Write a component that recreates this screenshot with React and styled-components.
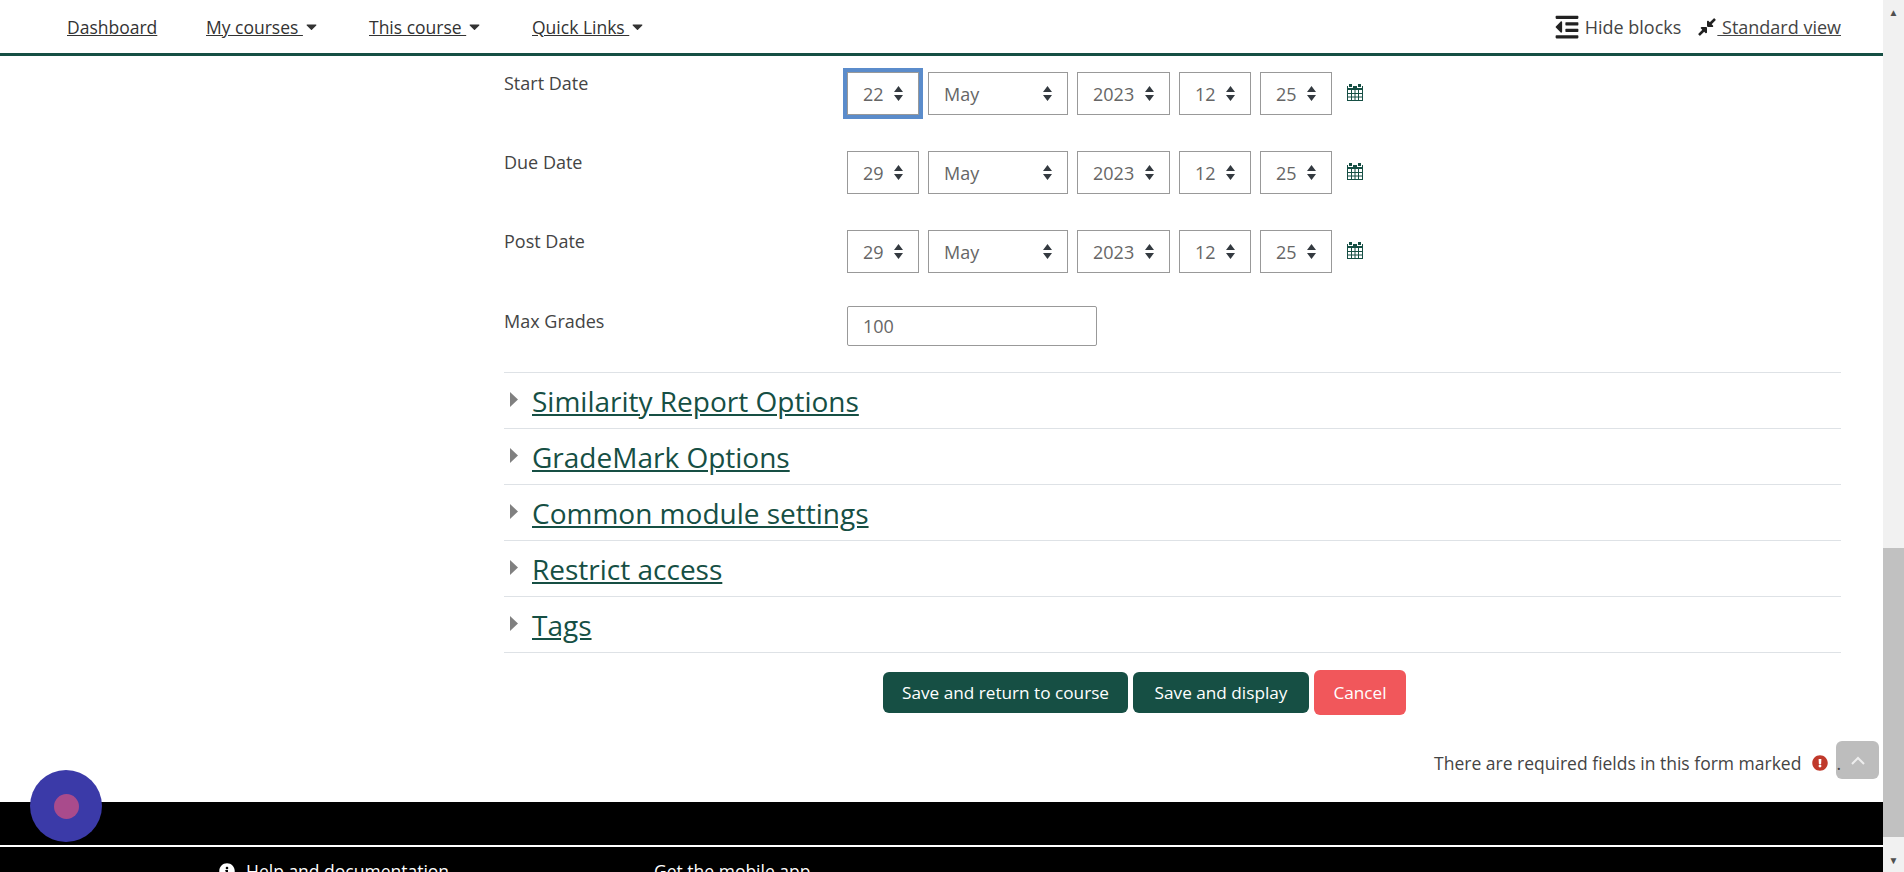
import styled, { createGlobalStyle } from "styled-components";
import {
  FaCaretDown,
  FaCompressAlt,
  FaExclamationCircle,
  FaInfoCircle,
  FaOutdent,
} from "react-icons/fa";

const GREEN = "#164f44";

const GlobalStyle = createGlobalStyle`
  html, body {
    margin: 0;
    height: 100%;
    overflow: hidden;
    background: #fff;
  }
  body {
    font-family: "Open Sans", "Noto Sans", "Liberation Sans", sans-serif;
    font-size: 17.5px;
    color: #444;
  }
`;

const Page = styled.div`
  display: flex;
  height: 872px;
  overflow: hidden;
  position: relative;
`;

const Main = styled.div`
  flex: 1;
  min-width: 0;
  display: flex;
  flex-direction: column;
`;

// top bar
const NavBar = styled.nav`
  height: 53px;
  flex: none;
  display: flex;
  align-items: center;
  justify-content: space-between;
  padding: 0 42px 0 67px;
  border-bottom: 3px solid ${GREEN};
`;

const NavLinks = styled.div`
  display: flex;
  align-items: center;
`;

const NavLink = styled.a`
  display: flex;
  align-items: center;
  color: #333;
  width: ${(props) => props.width};
  span {
    text-decoration: underline;
    white-space: pre;
  }
  svg {
    font-size: 17px;
  }
`;

const NavRight = styled.div`
  display: flex;
  align-items: center;
  font-size: 18px;
`;

const IconText = styled.span`
  display: flex;
  align-items: center;
  gap: ${(props) => props.gap || "5px"};
  margin-left: ${(props) => props.margin || "0"};
  svg {
    font-size: ${(props) => props.iconSize || "26px"};
    color: #222;
  }
`;

const Underlined = styled.span`
  text-decoration: underline;
  white-space: pre;
`;

// form
const Content = styled.div`
  flex: 1;
  display: flex;
  flex-direction: column;
  padding: 16px 42px 0 504px;
`;

const DateRow = styled.div`
  display: flex;
  height: ${(props) => props.height || "43px"};
  margin-bottom: ${(props) => props.bottom || "36px"};
`;

const Label = styled.div`
  width: 343px;
  flex: none;
  font-size: 18px;
  line-height: 22px;
  padding-top: ${(props) => props.top || "0"};
`;

const Fields = styled.div`
  display: flex;
  align-items: center;
  gap: 9px;
`;

const SelectBox = styled.div`
  box-sizing: border-box;
  width: ${(props) => props.width}px;
  height: 43px;
  display: flex;
  align-items: center;
  justify-content: space-between;
  padding: 0 14px 0 15px;
  border: 1px solid #999;
  font-size: 18px;
  color: #666;
  ${(props) => props.focused && `outline: 4px solid #5b8ccb; outline-offset: 0;`}
`;

const ArrowIcon = styled.svg`
  width: 11px;
  height: 17px;
  fill: #343a40;
`;

const CalendarIcon = styled.svg`
  width: 18px;
  height: 19px;
  margin: -2px 0 0 5px;
  color: ${GREEN};
`;

const TextInput = styled.div`
  box-sizing: border-box;
  width: 250px;
  height: 40px;
  display: flex;
  align-items: center;
  padding: 0 15px;
  border: 1px solid #999;
  border-radius: 2px;
  font-size: 18px;
  color: #666;
`;

const Sections = styled.div`
  margin-top: -10px;
  border-top: 1px solid #dee2e6;
`;

const Section = styled.div`
  box-sizing: border-box;
  height: 56px;
  display: flex;
  align-items: center;
  padding-left: 6px;
  border-bottom: 1px solid #dee2e6;
`;

const Triangle = styled.svg`
  width: 8px;
  height: 15px;
  fill: #808080;
  margin-right: 14px;
  margin-top: -3px;
  flex: none;
`;

const SectionTitle = styled.a`
  font-size: 28px;
  color: ${GREEN};
  text-decoration: underline;
`;

const Buttons = styled.div`
  display: flex;
  align-items: center;
  gap: 5px;
  margin: 17px 0 0 379px;
`;

const Button = styled.button`
  height: ${(props) => (props.danger ? "45px" : "41px")};
  padding: 0;
  width: ${(props) => props.width}px;
  border: none;
  border-radius: 6px;
  background: ${(props) => (props.danger ? "#f1575b" : GREEN)};
  color: #fff;
  font-family: inherit;
  font-size: 17.2px;
`;

const RequiredNote = styled.div`
  position: relative;
  z-index: 1;
  display: flex;
  align-items: center;
  justify-content: flex-end;
  margin-top: 36px;
  height: 24px;
  svg {
    color: #c0392b;
    font-size: 16px;
    margin: 0 8px 0 11px;
  }
`;

// footer, cut off by the window
const Footer = styled.footer`
  height: 70px;
  flex: none;
  background: #000;
  color: #fff;
  overflow: hidden;
`;

const FooterRule = styled.div`
  height: 2px;
  margin-top: 43px;
  background: #fff;
`;

const FooterCols = styled.div`
  display: flex;
  padding: 12px 0 0 219px;
  line-height: 24px;
`;

const FooterCol = styled.div`
  width: ${(props) => props.width || "auto"};
  display: flex;
  align-items: center;
  gap: 11px;
  svg {
    font-size: 16px;
  }
`;

// browser scrollbar
const Scrollbar = styled.div`
  width: 21px;
  flex: none;
  background: #f1f1f1;
  display: flex;
  flex-direction: column;
  align-items: center;
`;

const ScrollArrow = styled.div`
  height: 24px;
  flex: none;
  display: flex;
  align-items: center;
  justify-content: center;
  color: #505050;
  font-size: 10px;
`;

const ScrollSpace = styled.div`
  flex: ${(props) => props.grow};
`;

const ScrollThumb = styled.div`
  width: 100%;
  height: 289px;
  background: #c1c1c1;
`;

// things floating over the page
const ChatBubble = styled.div`
  position: absolute;
  left: 30px;
  top: 770px;
  width: 72px;
  height: 72px;
  border-radius: 50%;
  background: #3b3aa8;
  display: flex;
  align-items: center;
  justify-content: center;
`;

const ChatDot = styled.div`
  width: 25px;
  height: 25px;
  border-radius: 50%;
  background: #a94b8c;
`;

const BackToTop = styled.div`
  position: absolute;
  left: 1836px;
  top: 741px;
  width: 43px;
  height: 38px;
  border-radius: 6px;
  background: #bdbdbd;
  display: flex;
  align-items: center;
  justify-content: center;
`;

function UpDown() {
  return (
    <ArrowIcon viewBox="0 0 11 17">
      <path d="M5.5 1 10 7H1zM5.5 16 1 10h9z" />
    </ArrowIcon>
  );
}

function Calendar() {
  return (
    <CalendarIcon viewBox="0 0 18 19">
      <path
        fill="currentColor"
        d="M3 1h3v3H3zM12 1h3v3h-3zM1 3h1v2h5V3h4v2h5V3h1v15H1zM2 7v10h14V7z"
      />
      <path
        fill="none"
        stroke="currentColor"
        strokeWidth="1"
        d="M5.5 7v10M9 7v10M12.5 7v10M2 10.5h14M2 14h14"
      />
    </CalendarIcon>
  );
}

function DateFields({ day }) {
  return (
    <Fields>
      <SelectBox width={72} focused={day === "22"}>
        {day}
        <UpDown />
      </SelectBox>
      <SelectBox width={140}>
        May
        <UpDown />
      </SelectBox>
      <SelectBox width={93}>
        2023
        <UpDown />
      </SelectBox>
      <SelectBox width={72}>
        12
        <UpDown />
      </SelectBox>
      <SelectBox width={72}>
        25
        <UpDown />
      </SelectBox>
      <Calendar />
    </Fields>
  );
}

const sectionTitles = [
  "Similarity Report Options",
  "GradeMark Options",
  "Common module settings",
  "Restrict access",
  "Tags",
];

export default function App() {
  return (
    <Page>
      <GlobalStyle />
      <Main>
        <NavBar>
          <NavLinks>
            <NavLink width="139px">
              <span>Dashboard</span>
            </NavLink>
            <NavLink width="163px">
              <span>My courses </span>
              <FaCaretDown />
            </NavLink>
            <NavLink width="163px">
              <span>This course </span>
              <FaCaretDown />
            </NavLink>
            <NavLink>
              <span>Quick Links </span>
              <FaCaretDown />
            </NavLink>
          </NavLinks>
          <NavRight>
            <IconText>
              <FaOutdent />
              Hide blocks
            </IconText>
            <IconText margin="16px" gap="0" iconSize="20px">
              <FaCompressAlt />
              <Underlined> Standard view</Underlined>
            </IconText>
          </NavRight>
        </NavBar>
        <Content>
          <DateRow>
            <Label>Start Date</Label>
            <DateFields day="22" />
          </DateRow>
          <DateRow>
            <Label>Due Date</Label>
            <DateFields day="29" />
          </DateRow>
          <DateRow bottom="33px">
            <Label>Post Date</Label>
            <DateFields day="29" />
          </DateRow>
          <DateRow height="40px">
            <Label top="4px">Max Grades</Label>
            <TextInput>100</TextInput>
          </DateRow>
          <Sections>
            {sectionTitles.map((title) => (
              <Section key={title}>
                <Triangle viewBox="0 0 8 15">
                  <path d="M0 0l8 7.5L0 15z" />
                </Triangle>
                <SectionTitle>{title}</SectionTitle>
              </Section>
            ))}
          </Sections>
          <Buttons>
            <Button width={245}>Save and return to course</Button>
            <Button width={176}>Save and display</Button>
            <Button width={92} danger>
              Cancel
            </Button>
          </Buttons>
          <RequiredNote>
            There are required fields in this form marked
            <FaExclamationCircle />.
          </RequiredNote>
        </Content>
        <Footer>
          <FooterRule />
          <FooterCols>
            <FooterCol width="435px">
              <FaInfoCircle />
              Help and documentation
            </FooterCol>
            <FooterCol>Get the mobile app</FooterCol>
          </FooterCols>
        </Footer>
      </Main>
      <Scrollbar>
        <ScrollArrow>▲</ScrollArrow>
        <ScrollSpace grow={524} />
        <ScrollThumb />
        <ScrollSpace grow={11} />
        <ScrollArrow>▼</ScrollArrow>
      </Scrollbar>
      <ChatBubble>
        <ChatDot />
      </ChatBubble>
      <BackToTop>
        <svg width="16" height="9" viewBox="0 0 16 9" fill="none" stroke="#eee" strokeWidth="2">
          <path d="M2 8l6-6 6 6" />
        </svg>
      </BackToTop>
    </Page>
  );
}
